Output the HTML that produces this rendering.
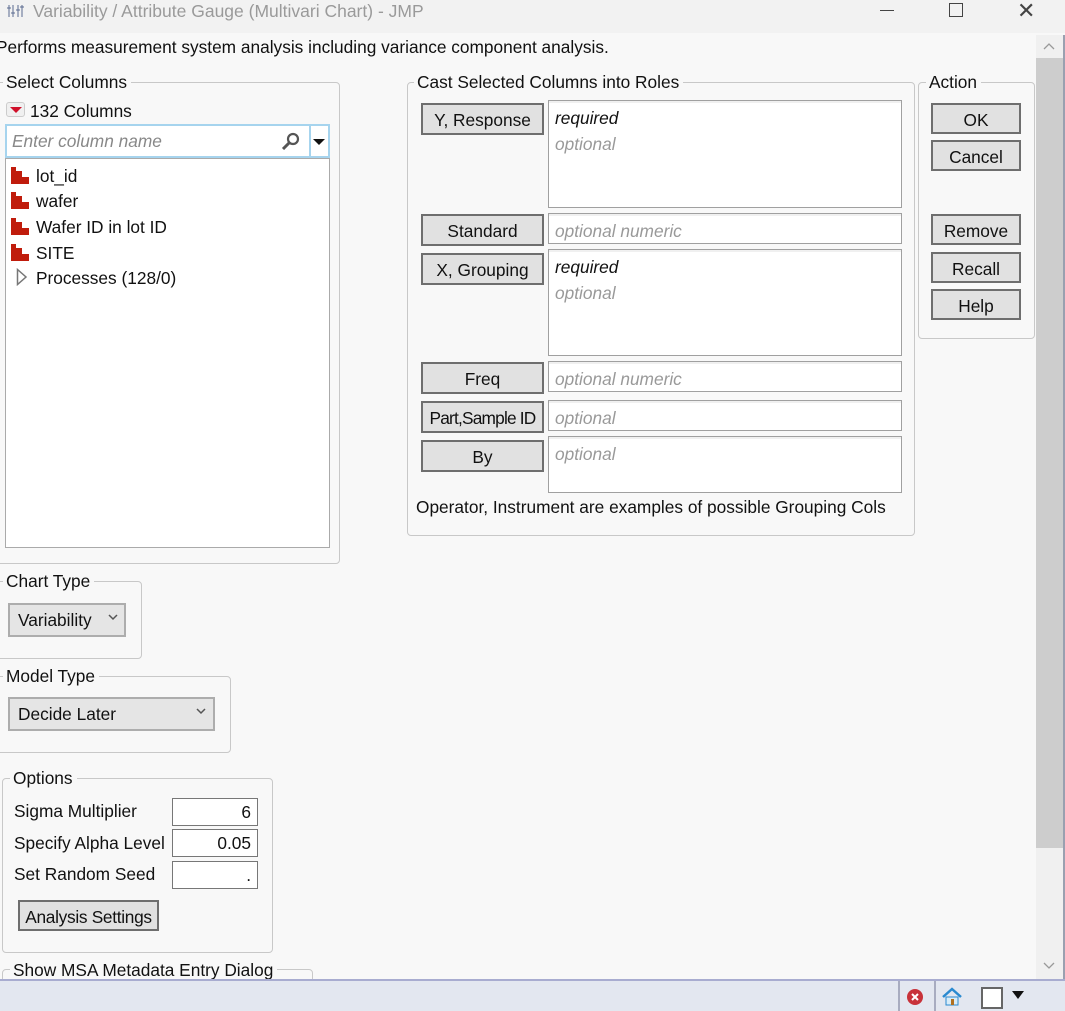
<!DOCTYPE html>
<html><head><meta charset="utf-8"><style>
*{box-sizing:border-box;margin:0;padding:0}
body{width:1065px;height:1011px;overflow:hidden;background:#f8f8f8;font-family:"Liberation Sans",sans-serif;font-size:17.3px;color:#111;position:relative}
.a{position:absolute;white-space:nowrap}
.grp{position:absolute;border:1px solid #c8c8c8;border-radius:4px}
.lbl{position:absolute;background:#f8f8f8;padding:0 4px 0 3px;line-height:20px}
.btn{position:absolute;background:#e1e1e1;border:2px solid #6e6e6e;text-align:center;line-height:30px}
.box{position:absolute;background:#fff;border:1px solid #a0a0a0;border-top:3px solid #f0f0f0;outline:1px solid #a0a0a0;outline-offset:-1px;padding:2px 6px 0;font-style:italic;color:#999;line-height:26px}
.dd{position:absolute;background:#e5e5e5;border:2px solid #adadad;line-height:31px;padding-left:8px}
.inp{position:absolute;background:#fff;border:1px solid #777;text-align:right;padding-right:6px;line-height:27px}
.chev{position:absolute;top:9px}
</style></head><body>
<div class="a" style="left:0;top:0;width:1065px;height:33px;background:#f2f2f2"></div>
<svg class="a" style="left:7px;top:4px" width="18" height="14"><g stroke="#5a6a90" stroke-width="1"><line x1="2" y1="1" x2="2" y2="13"/><line x1="6" y1="1" x2="6" y2="13"/><line x1="11" y1="1" x2="11" y2="13"/><line x1="15" y1="1" x2="15" y2="13"/><line x1="0" y1="4" x2="4" y2="4"/><line x1="4" y1="9" x2="8" y2="9"/><line x1="9" y1="6" x2="13" y2="6"/><line x1="13" y1="3" x2="17" y2="3"/></g></svg>
<div class="a" style="left:33px;top:0px;color:#9a9a9a;font-size:17.5px;line-height:22px">Variability / Attribute Gauge (Multivari Chart) - JMP</div>
<div class="a" style="left:880px;top:10px;width:14px;height:1px;background:#444"></div>
<div class="a" style="left:949px;top:3px;width:14px;height:14px;border:1px solid #444"></div>
<div class="a" style="left:1017px;top:-2px;font-size:22px;color:#444">✕</div>
<div class="a" style="left:-4px;top:37px;line-height:20px">Performs measurement system analysis including variance component analysis.</div>

<div class="grp" style="left:-4px;top:82px;width:344px;height:482px"></div>
<div class="lbl" style="left:3px;top:72px">Select Columns</div>
<div class="a" style="left:6px;top:102px;width:19px;height:15px;background:#f0f0f0;border:1px solid #ccc;border-radius:3px"></div>
<div class="a" style="left:10px;top:107px;width:0;height:0;border-left:6px solid transparent;border-right:6px solid transparent;border-top:6px solid #d0102a"></div>
<div class="a" style="left:30px;top:101px;line-height:20px">132 Columns</div>
<div class="a" style="left:5px;top:124px;width:325px;height:34px;background:#fff;border:2px solid #a6d4ee"></div>
<div class="a" style="left:309px;top:124px;width:2px;height:34px;background:#a6d4ee"></div>
<div class="a" style="left:12px;top:131px;line-height:20px;font-style:italic;color:#888">Enter column name</div>
<svg class="a" style="left:281px;top:132px" width="20" height="18"><circle cx="12" cy="7" r="5" fill="none" stroke="#555" stroke-width="2.2"/><line x1="8" y1="11" x2="2" y2="17" stroke="#555" stroke-width="3"/></svg>
<div class="a" style="left:313px;top:139px;border-left:6px solid transparent;border-right:6px solid transparent;border-top:6px solid #111"></div>
<div class="a" style="left:5px;top:158px;width:325px;height:390px;background:#fff;border:1px solid #aaa"></div>
<svg class="a" style="left:11px;top:167px" width="20" height="17"><path d="M0 0H5V4H11V10H18V17H0Z" fill="#c01c0c"/></svg>
<svg class="a" style="left:11px;top:192px" width="20" height="17"><path d="M0 0H5V4H11V10H18V17H0Z" fill="#c01c0c"/></svg>
<svg class="a" style="left:11px;top:218px" width="20" height="17"><path d="M0 0H5V4H11V10H18V17H0Z" fill="#c01c0c"/></svg>
<svg class="a" style="left:11px;top:244px" width="20" height="17"><path d="M0 0H5V4H11V10H18V17H0Z" fill="#c01c0c"/></svg>
<svg class="a" style="left:16px;top:268px" width="12" height="18"><path d="M1.5 1.5 L10 9 L1.5 16.5 Z" fill="#fff" stroke="#777" stroke-width="1.5"/></svg>
<div class="a" style="left:36px;top:166px;line-height:20px">lot_id</div>
<div class="a" style="left:36px;top:191px;line-height:20px">wafer</div>
<div class="a" style="left:36px;top:217px;line-height:20px">Wafer ID in lot ID</div>
<div class="a" style="left:36px;top:243px;line-height:20px">SITE</div>
<div class="a" style="left:36px;top:268px;line-height:20px">Processes (128/0)</div>

<div class="grp" style="left:-4px;top:581px;width:146px;height:78px"></div>
<div class="lbl" style="left:3px;top:571px">Chart Type</div>
<div class="dd" style="left:8px;top:603px;width:118px;height:34px">Variability <svg class="chev" style="left:98px" width="10" height="8"><path d="M1 1L5 5L9 1" fill="none" stroke="#555" stroke-width="1.5"/></svg></div>
<div class="grp" style="left:-4px;top:676px;width:235px;height:77px"></div>
<div class="lbl" style="left:3px;top:666px">Model Type</div>
<div class="dd" style="left:8px;top:697px;width:207px;height:34px">Decide Later <svg class="chev" style="left:186px" width="10" height="8"><path d="M1 1L5 5L9 1" fill="none" stroke="#555" stroke-width="1.5"/></svg></div>
<div class="grp" style="left:2px;top:778px;width:271px;height:175px"></div>
<div class="lbl" style="left:10px;top:768px">Options</div>
<div class="a" style="left:14px;top:801px;line-height:20px">Sigma Multiplier</div>
<div class="a" style="left:14px;top:833px;line-height:20px">Specify Alpha Level</div>
<div class="a" style="left:14px;top:864px;line-height:20px">Set Random Seed</div>
<div class="inp" style="left:172px;top:798px;width:86px;height:28px">6</div>
<div class="inp" style="left:172px;top:829px;width:86px;height:28px">0.05</div>
<div class="inp" style="left:172px;top:861px;width:86px;height:28px">.</div>
<div class="btn" style="left:18px;top:900px;width:141px;height:31px;letter-spacing:-0.3px">Analysis Settings</div>
<div class="grp" style="left:2px;top:969px;width:311px;height:30px"></div>
<div class="lbl" style="left:10px;top:960px">Show MSA Metadata Entry Dialog</div>

<div class="grp" style="left:407px;top:82px;width:508px;height:454px"></div>
<div class="lbl" style="left:414px;top:72px">Cast Selected Columns into Roles</div>
<div class="btn" style="left:421px;top:103px;width:123px;height:32px">Y, Response</div>
<div class="btn" style="left:421px;top:214px;width:123px;height:32px">Standard</div>
<div class="btn" style="left:421px;top:253px;width:123px;height:32px">X, Grouping</div>
<div class="btn" style="left:421px;top:362px;width:123px;height:32px">Freq</div>
<div class="btn" style="left:421px;top:401px;width:123px;height:32px;letter-spacing:-0.8px">Part,Sample ID</div>
<div class="btn" style="left:421px;top:440px;width:123px;height:32px">By</div>
<div class="box" style="left:548px;top:100px;width:354px;height:108px"><span style="color:#111">required</span><br>optional</div>
<div class="box" style="left:548px;top:213px;width:354px;height:31px">optional numeric</div>
<div class="box" style="left:548px;top:249px;width:354px;height:107px"><span style="color:#111">required</span><br>optional</div>
<div class="box" style="left:548px;top:361px;width:354px;height:31px">optional numeric</div>
<div class="box" style="left:548px;top:400px;width:354px;height:31px">optional</div>
<div class="box" style="left:548px;top:436px;width:354px;height:57px">optional</div>
<div class="a" style="left:416px;top:497px;line-height:20px;font-size:17.3px">Operator, Instrument are examples of possible Grouping Cols</div>

<div class="grp" style="left:918px;top:82px;width:117px;height:257px"></div>
<div class="lbl" style="left:926px;top:72px">Action</div>
<div class="btn" style="left:931px;top:103px;width:90px;height:31px">OK</div>
<div class="btn" style="left:931px;top:140px;width:90px;height:31px">Cancel</div>
<div class="btn" style="left:931px;top:214px;width:90px;height:31px">Remove</div>
<div class="btn" style="left:931px;top:252px;width:90px;height:31px">Recall</div>
<div class="btn" style="left:931px;top:289px;width:90px;height:31px">Help</div>

<div class="a" style="left:1036px;top:35px;width:28px;height:944px;background:#f0f0f0"></div>
<div class="a" style="left:1036px;top:58px;width:28px;height:790px;background:#cdcdcd"></div>
<div class="a" style="left:1063px;top:35px;width:2px;height:944px;background:#9aa0b0"></div>
<svg class="a" style="left:1043px;top:42px" width="12" height="8"><path d="M1 7L6 2L11 7" fill="none" stroke="#999" stroke-width="1.3"/></svg>
<svg class="a" style="left:1043px;top:962px" width="12" height="8"><path d="M1 1L6 6L11 1" fill="none" stroke="#999" stroke-width="1.3"/></svg>

<div class="a" style="left:0;top:979px;width:1065px;height:32px;background:#e3e7f0;border-top:2px solid #a8acd0"></div>
<div class="a" style="left:898px;top:981px;width:2px;height:30px;background:#a8acc0"></div>
<div class="a" style="left:934px;top:981px;width:2px;height:30px;background:#a8acc0"></div>
<svg class="a" style="left:906px;top:988px" width="18" height="18"><circle cx="9" cy="9" r="8" fill="#c8323a"/><path d="M6 6L12 12M12 6L6 12" stroke="#fff" stroke-width="2"/></svg>
<svg class="a" style="left:942px;top:987px" width="20" height="20"><path d="M1 10L10 2L19 10" fill="none" stroke="#2a8ad0" stroke-width="2.5"/><rect x="4" y="10" width="12" height="8" fill="#d8ecf8" stroke="#2a8ad0"/><rect x="9" y="12" width="3" height="6" fill="#b07020"/></svg>
<div class="a" style="left:981px;top:987px;width:22px;height:22px;background:#fff;border:2px solid #666"></div>
<div class="a" style="left:1012px;top:991px;border-left:6px solid transparent;border-right:6px solid transparent;border-top:8px solid #111"></div>
</body></html>
